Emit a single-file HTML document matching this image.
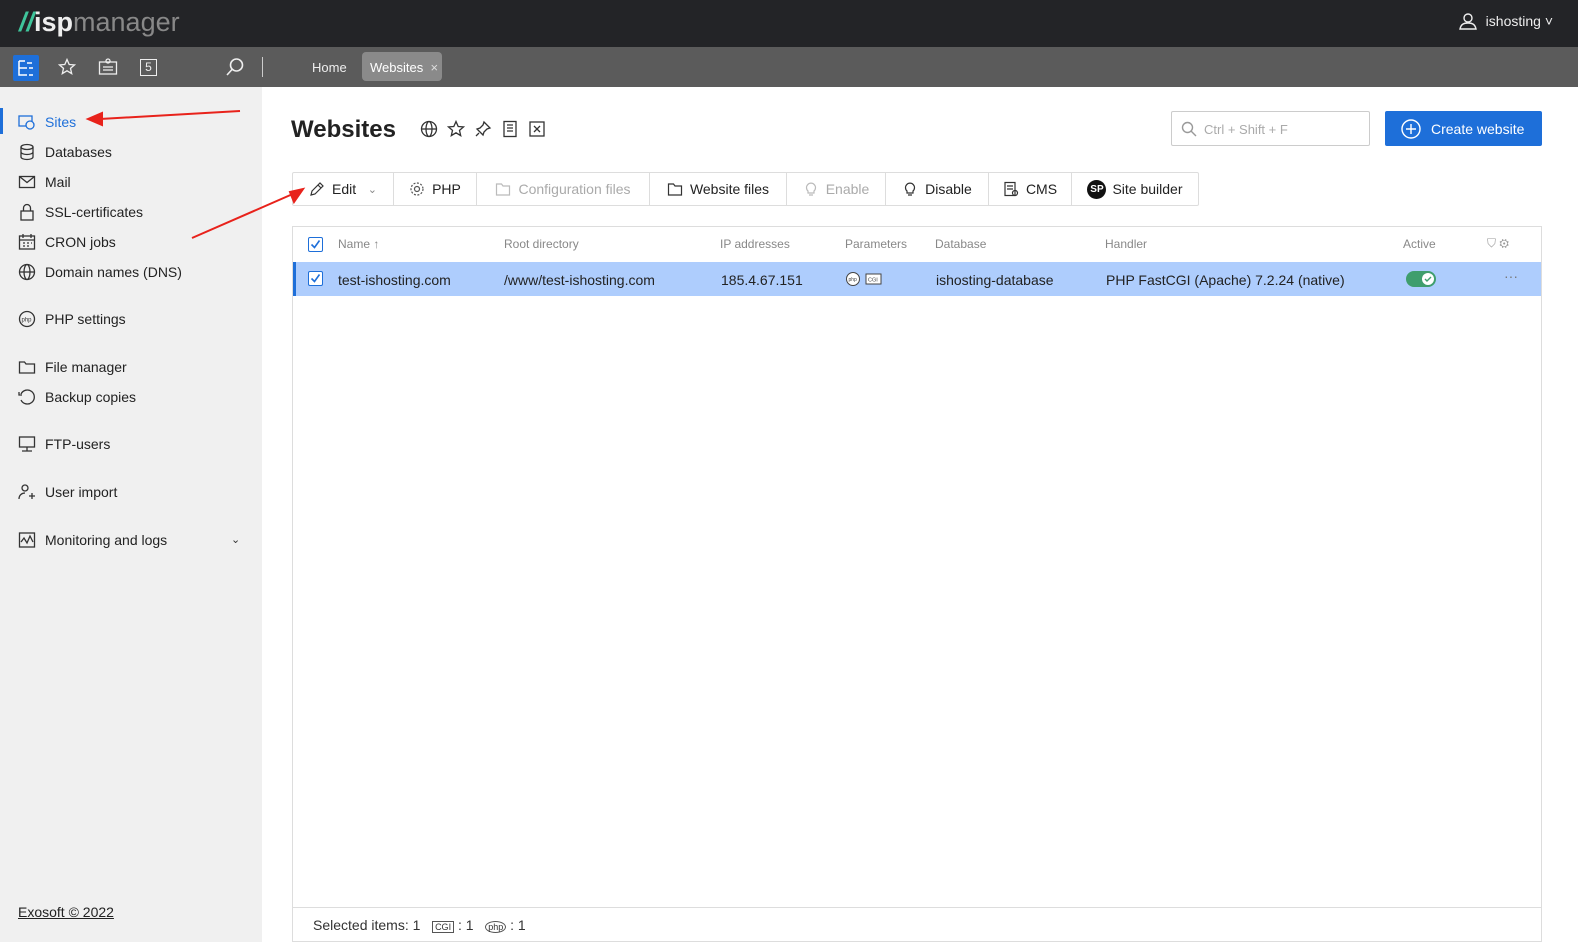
<!DOCTYPE html><html><head><meta charset="utf-8"><style>
*{box-sizing:border-box;margin:0;padding:0}
body{width:1578px;height:942px;overflow:hidden;font-family:"Liberation Sans",sans-serif;background:#fff;position:relative;color:#222}
.top{position:absolute;left:0;top:0;width:1578px;height:47px;background:#232427}
.bar{position:absolute;left:0;top:47px;width:1578px;height:40px;background:#5b5b5b}
.side{position:absolute;left:0;top:87px;width:262px;height:855px;background:#f0f0f0}
.side .it{position:absolute;left:18px;font-size:14px;color:#222;display:flex;align-items:center}
.side .it svg{width:18px;height:18px;margin-right:9px}
.tb{position:absolute;left:292px;top:172px;height:34px;width:907px;border:1px solid #ddd;border-radius:2px;display:flex;align-items:center;font-size:14px}
.tb .b{display:flex;align-items:center;justify-content:center;height:100%;border-right:1px solid #ddd;white-space:nowrap;flex:none}
.tb .b:last-child{border:none}
.tb .b svg{width:16px;height:16px;margin-right:7px}
.dis{color:#aaa}
.tbl{position:absolute;left:292px;top:226px;width:1250px;height:716px;border:1px solid #ddd}
.th{position:absolute;top:17px;font-size:12px;color:#888}
.row{position:absolute;left:0;top:35px;width:1248px;height:34px;background:#aecdfd;border-left:3px solid #1e6fd9;font-size:14px}
.row span{position:absolute;top:10px}
.cb{position:absolute;width:15px;height:15px;border:1.5px solid #1e6fd9;border-radius:2px;background:#fff}
</style></head><body>
<div class="top">
<div style="position:absolute;left:19px;top:7px;font-size:27px;color:#eee;font-weight:bold"><span style="color:#3fc59b;font-style:italic">//</span>isp<span style="color:#888;font-weight:normal">manager</span></div>
<div style="position:absolute;right:25px;top:12px;font-size:14px;color:#eee;display:flex;align-items:center"><svg width="20" height="18" viewBox="0 0 20 18" fill="none" stroke="#eee" stroke-width="1.4"><circle cx="10" cy="6" r="4"/><path d="M2 17c1-5 4-6 8-6s7 1 8 6z"/></svg>&nbsp; ishosting ˅</div>
</div>
<div class="bar">
<div style="position:absolute;left:13px;top:8px;width:26px;height:26px;background:#1e6fd9;border-radius:2px"><svg width="26" height="26" viewBox="0 0 26 26" fill="none" stroke="#fff" stroke-width="1.5"><path d="M6 6h6M6 6v14h8M6 13h8M14 8h5M16 13h4M16 20h4"/></svg></div>
<svg style="position:fixed;left:58px;top:58px" width="18" height="18" viewBox="0 0 18 18" fill="none" stroke="#eee" stroke-width="1.3"><path d="M9 1.5l2.2 5 5.3.4-4 3.5 1.2 5.2L9 12.8 4.3 15.6l1.2-5.2-4-3.5 5.3-.4z"/></svg>
<svg style="position:fixed;left:98px;top:58px" width="20" height="18" viewBox="0 0 20 18" fill="none" stroke="#eee" stroke-width="1.3"><rect x="1.5" y="4" width="17" height="12"/><circle cx="10" cy="3" r="2"/><path d="M5 9h10M5 12h10"/></svg>
<div style="position:absolute;left:140px;top:12px;width:17px;height:17px;border:1.3px solid #eee;color:#eee;font-size:12px;text-align:center;line-height:15px">5</div>
<svg style="position:fixed;left:225px;top:57px" width="20" height="20" viewBox="0 0 20 20" fill="none" stroke="#eee" stroke-width="1.6"><circle cx="11.5" cy="8" r="6"/><path d="M7 12.5L2 18"/></svg>
<div style="position:absolute;left:262px;top:10px;width:1px;height:20px;background:#ccc"></div>
<div style="position:absolute;left:312px;top:13px;font-size:13px;color:#eee">Home</div>
<div style="position:absolute;left:362px;top:5px;width:80px;height:29px;background:#8a8a8a;border-radius:4px;color:#fff;font-size:13px;padding:8px 0 0 8px">Websites <span style="color:#ddd">&nbsp;×</span></div>
</div>
<div class="side">
<div style="position:absolute;left:0;top:21px;width:3px;height:26px;background:#1e6fd9"></div>
<div class="it" style="top:26px;color:#1e6fd9"><svg viewBox="0 0 18 18" fill="none" stroke="#1e6fd9" stroke-width="1.3"><rect x="1" y="3" width="13" height="10"/><circle cx="12" cy="12" r="4" fill="#f0f0f0"/></svg>Sites</div>
<div class="it" style="top:56px"><svg viewBox="0 0 18 18" fill="none" stroke="#333" stroke-width="1.3"><ellipse cx="9" cy="4" rx="6" ry="2.5"/><path d="M3 4v10c0 1.5 3 2.5 6 2.5s6-1 6-2.5V4M3 9c0 1.5 3 2.5 6 2.5s6-1 6-2.5"/></svg>Databases</div>
<div class="it" style="top:86px"><svg viewBox="0 0 18 18" fill="none" stroke="#333" stroke-width="1.3"><rect x="1.5" y="3.5" width="15" height="11"/><path d="M1.5 3.5l7.5 6 7.5-6"/></svg>Mail</div>
<div class="it" style="top:116px"><svg viewBox="0 0 18 18" fill="none" stroke="#333" stroke-width="1.3"><rect x="3" y="8" width="12" height="9"/><path d="M5.5 8V5a3.5 3.5 0 017 0v3"/></svg>SSL-certificates</div>
<div class="it" style="top:146px"><svg viewBox="0 0 18 18" fill="none" stroke="#333" stroke-width="1.3"><rect x="1.5" y="3" width="15" height="13"/><path d="M1.5 7h15M5 1v4M13 1v4M5 10h2M9 10h2M13 10h1M5 13h2M9 13h2"/></svg>CRON jobs</div>
<div class="it" style="top:176px"><svg viewBox="0 0 18 18" fill="none" stroke="#333" stroke-width="1.3"><circle cx="9" cy="9" r="7.5"/><ellipse cx="9" cy="9" rx="3" ry="7.5"/><path d="M1.5 9h15"/></svg>Domain names (DNS)</div>
<div class="it" style="top:223px"><svg viewBox="0 0 18 18" fill="none" stroke="#333" stroke-width="1.3"><circle cx="9" cy="9" r="7.5"/><text x="3.5" y="11.5" font-size="6" fill="#333" stroke="none">php</text></svg>PHP settings</div>
<div class="it" style="top:271px"><svg viewBox="0 0 18 18" fill="none" stroke="#333" stroke-width="1.3"><path d="M1.5 4h5l1.5 2h8.5v9h-15z"/></svg>File manager</div>
<div class="it" style="top:301px"><svg viewBox="0 0 18 18" fill="none" stroke="#333" stroke-width="1.3"><path d="M3 6a7 7 0 110 6"/><path d="M1 4v3h3"/></svg>Backup copies</div>
<div class="it" style="top:348px"><svg viewBox="0 0 18 18" fill="none" stroke="#333" stroke-width="1.3"><rect x="1.5" y="2" width="15" height="10"/><path d="M9 12v4M4 16h10"/></svg>FTP-users</div>
<div class="it" style="top:396px"><svg viewBox="0 0 18 18" fill="none" stroke="#333" stroke-width="1.3"><circle cx="7" cy="5" r="3"/><path d="M1 16c0-4 3-6 6-6M11 13h6M14 10v6"/></svg>User import</div>
<div class="it" style="top:444px"><svg viewBox="0 0 18 18" fill="none" stroke="#333" stroke-width="1.3"><rect x="1.5" y="2" width="15" height="14"/><path d="M3 11l3-4 3 5 3-7 3 6"/></svg>Monitoring and logs</div>
<div style="position:absolute;left:231px;top:446px;font-size:11px;color:#333">⌄</div>
<div style="position:absolute;left:18px;top:817px;font-size:14px;text-decoration:underline">Exosoft © 2022</div>
</div>
<div style="position:absolute;left:291px;top:116px;font-size:24px;font-weight:bold;color:#222">Websites</div>
<div style="position:absolute;left:420px;top:120px;display:flex;gap:9px">
<svg width="18" height="18" viewBox="0 0 18 18" fill="none" stroke="#333" stroke-width="1.3"><circle cx="9" cy="9" r="7.5"/><ellipse cx="9" cy="9" rx="3" ry="7.5"/><path d="M1.5 9h15"/></svg>
<svg width="18" height="18" viewBox="0 0 18 18" fill="none" stroke="#333" stroke-width="1.3"><path d="M9 1.5l2.2 5 5.3.4-4 3.5 1.2 5.2L9 12.8 4.3 15.6l1.2-5.2-4-3.5 5.3-.4z"/></svg>
<svg width="18" height="18" viewBox="0 0 18 18" fill="none" stroke="#333" stroke-width="1.3"><path d="M10 2l6 6-3 1-3 3-1 3-6-6 3-1 3-3zM5 13l-3 3"/></svg>
<svg width="18" height="18" viewBox="0 0 18 18" fill="none" stroke="#333" stroke-width="1.3"><rect x="3" y="1.5" width="12" height="15"/><path d="M6 5h6M6 8h6M6 11h6"/></svg>
<svg width="18" height="18" viewBox="0 0 18 18" fill="none" stroke="#333" stroke-width="1.3"><rect x="2" y="2" width="14" height="14"/><path d="M6 6l6 6M12 6l-6 6"/></svg>
</div>
<div style="position:absolute;left:1171px;top:111px;width:199px;height:35px;border:1px solid #ccc;border-radius:2px;font-size:13px;color:#aaa;padding:10px 0 0 32px">Ctrl + Shift + F<svg style="position:absolute;left:9px;top:9px" width="16" height="16" viewBox="0 0 16 16" fill="none" stroke="#999" stroke-width="1.4"><circle cx="6.5" cy="6.5" r="5"/><path d="M10 10l5 5"/></svg></div>
<div style="position:absolute;left:1385px;top:111px;width:157px;height:35px;background:#1e6fd9;border-radius:2px;color:#fff;font-size:14px;padding:10px 0 0 46px">Create website<svg style="position:absolute;left:16px;top:8px" width="20" height="20" viewBox="0 0 20 20" fill="none" stroke="#fff" stroke-width="1.4"><circle cx="10" cy="10" r="9"/><path d="M10 5v10M5 10h10"/></svg></div>
<div class="tb">
<div class="b" style="width:101px"><svg viewBox="0 0 16 16" fill="none" stroke="#333" stroke-width="1.2"><path d="M2 14l1-4 8-8 3 3-8 8zM9 4l3 3"/></svg>Edit&nbsp;&nbsp;&nbsp;<span style="color:#888;font-size:11px">⌄</span></div>
<div class="b" style="width:83px"><svg viewBox="0 0 16 16" fill="none" stroke="#555" stroke-width="1.2"><circle cx="8" cy="8" r="2.5"/><circle cx="8" cy="8" r="6" stroke-dasharray="2 1.5"/></svg>PHP</div>
<div class="b dis" style="width:173px"><svg viewBox="0 0 16 16" fill="none" stroke="#bbb" stroke-width="1.2"><path d="M1.5 3h5l1.5 2h6.5v9h-13z"/></svg>Configuration files</div>
<div class="b" style="width:137px"><svg viewBox="0 0 16 16" fill="none" stroke="#333" stroke-width="1.2"><path d="M1.5 3h5l1.5 2h6.5v9h-13z"/></svg>Website files</div>
<div class="b dis" style="width:99px"><svg viewBox="0 0 16 16" fill="none" stroke="#bbb" stroke-width="1.2"><path d="M5 10a4.5 4.5 0 116 0v2H5zM6 14h4"/></svg>Enable</div>
<div class="b" style="width:103px"><svg viewBox="0 0 16 16" fill="none" stroke="#333" stroke-width="1.2"><path d="M5 10a4.5 4.5 0 116 0v2H5zM6 14h4"/></svg>Disable</div>
<div class="b" style="width:83px"><svg viewBox="0 0 16 16" fill="none" stroke="#333" stroke-width="1.2"><rect x="2" y="1.5" width="10" height="13"/><path d="M4 5h6M4 8h6"/><circle cx="12" cy="12" r="2.5"/></svg>CMS</div>
<div class="b" style="width:126px"><span style="width:19px;height:19px;border-radius:50%;background:#111;color:#fff;font-size:10px;font-weight:bold;display:inline-flex;align-items:center;justify-content:center;margin-right:6px">SP</span>Site builder</div>
</div>
<div class="tbl">
<div class="cb" style="left:15px;top:10px"><svg width="13" height="13" viewBox="0 0 13 13" fill="none" stroke="#1e6fd9" stroke-width="1.6"><path d="M2.5 6.5l3 3 5-7"/></svg></div>
<div class="th" style="left:45px;top:10px">Name ↑</div>
<div class="th" style="left:211px;top:10px">Root directory</div>
<div class="th" style="left:427px;top:10px">IP addresses</div>
<div class="th" style="left:552px;top:10px">Parameters</div>
<div class="th" style="left:642px;top:10px">Database</div>
<div class="th" style="left:812px;top:10px">Handler</div>
<div class="th" style="left:1110px;top:10px">Active</div>
<div class="th" style="left:1194px;top:9px;color:#999">⛉ ⚙</div>
<div class="row">
<div class="cb" style="left:12px;top:9px"><svg width="13" height="13" viewBox="0 0 13 13" fill="none" stroke="#1e6fd9" stroke-width="1.6"><path d="M2.5 6.5l3 3 5-7"/></svg></div>
<span style="left:42px">test-ishosting.com</span>
<span style="left:208px">/www/test-ishosting.com</span>
<span style="left:425px">185.4.67.151</span>
<span style="left:550px;top:9px"><svg width="40" height="16" viewBox="0 0 40 16" fill="none" stroke="#444" stroke-width="1"><circle cx="7" cy="8" r="6.5" fill="#fff"/><text x="2.5" y="10" font-size="5" fill="#444" stroke="none">php</text><rect x="20" y="3" width="15" height="10" fill="#fff"/><text x="22" y="10.5" font-size="5.5" fill="#444" stroke="none">CGI</text></svg></span>
<span style="left:640px">ishosting-database</span>
<span style="left:810px">PHP FastCGI (Apache) 7.2.24 (native)</span>
<span style="left:1110px;top:9px;width:30px;height:16px;background:#3f9e6d;border-radius:8px"><i style="position:absolute;right:2px;top:2px;width:12px;height:12px;border-radius:50%;background:#fff"></i><svg style="position:absolute;right:4px;top:5px" width="8" height="6" viewBox="0 0 8 6" fill="none" stroke="#3f9e6d" stroke-width="1.4"><path d="M1 3l2 2 4-4"/></svg></span>
<span style="left:1208px;top:6px;color:#777">···</span>
</div>
<div style="position:absolute;left:0;top:680px;width:1248px;border-top:1px solid #ddd"></div>
<div style="position:absolute;left:20px;top:690px;font-size:14px;color:#333">Selected items: 1 &nbsp;&nbsp;<span style="font-size:9px;border:1px solid #555;padding:0 2px">CGI</span> : 1 &nbsp;&nbsp;<span style="font-size:9px;border:1px solid #555;border-radius:50%;padding:0 2px">php</span> : 1</div>
</div>
<svg style="position:absolute;left:0;top:0" width="1578" height="942"><g stroke="#e8221b" stroke-width="2" fill="#e8221b"><path d="M240 111L100 119"/><path d="M88 119l14-6v12z"/><path d="M192 238L295 193"/><path d="M303 189l-9 13-4-10z"/></g></svg>
</body></html>
